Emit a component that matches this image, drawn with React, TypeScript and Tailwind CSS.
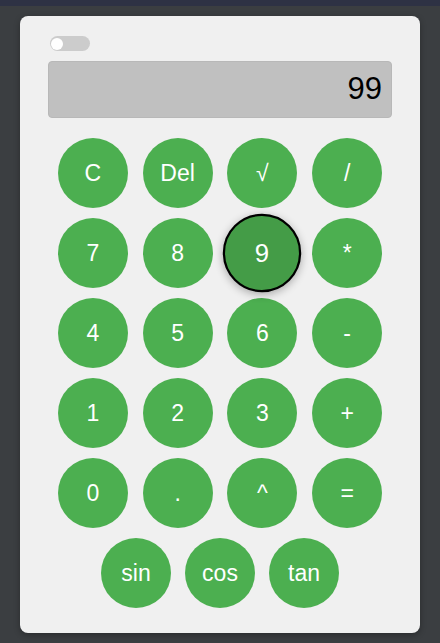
import React from "react";

const rows = [
  ["C", "Del", "√", "/"],
  ["7", "8", "9", "*"],
  ["4", "5", "6", "-"],
  ["1", "2", "3", "+"],
  ["0", ".", "^", "="],
];

function Btn({ label, hover }: { label: string; hover?: boolean }) {
  return (
    <button
      className={
        hover
          ? "w-[70px] h-[70px] rounded-full bg-[#449c47] text-white text-[23px] flex items-center justify-center border-2 border-black scale-[1.12] shadow-[0_2px_8px_rgba(0,0,0,0.3)] relative z-10"
          : "w-[70px] h-[70px] rounded-full bg-[#4caf50] text-white text-[23px] flex items-center justify-center"
      }
    >
      {label}
    </button>
  );
}

export default function App() {
  return (
    <div
      className="min-h-[643px] bg-[#3b3e41] flex flex-col"
      style={{ fontFamily: '"Liberation Sans", Arial, sans-serif' }}
    >
      <div className="h-[6px] bg-[#2e3244]" />
      <div className="mt-[10px] mx-[20px] w-[400px] bg-[#f0f0f0] rounded-[8px] px-[28px] pt-[20px] pb-[25px] shadow-[0_2px_6px_rgba(0,0,0,0.3)]">
        <div className="ml-[2px] w-[40px] h-[15px] rounded-full bg-[#cccccc] relative">
          <div className="absolute left-[1px] top-[1.5px] w-[12px] h-[12px] rounded-full bg-white" />
        </div>
        <div className="mt-[10px] h-[57px] rounded-[4px] bg-[#c0c0c0] border border-[#b8b8b8] flex items-center justify-end pr-[9px] text-[31px] text-black">
          99
        </div>
        <div className="mt-[20px] w-[339px] mx-auto grid grid-cols-4 gap-y-[10px] justify-items-center">
          {rows.flat().map((l) => (
            <Btn key={l} label={l} hover={l === "9"} />
          ))}
        </div>
        <div className="mt-[10px] flex justify-center gap-[14px]">
          <Btn label="sin" />
          <Btn label="cos" />
          <Btn label="tan" />
        </div>
      </div>
    </div>
  );
}
